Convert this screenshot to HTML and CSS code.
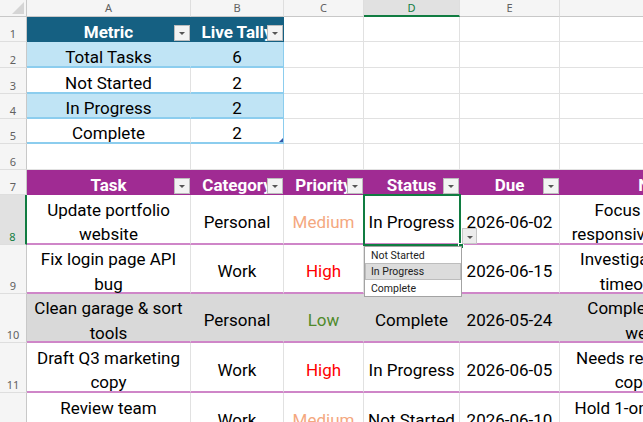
FILE: index.html
```html
<!DOCTYPE html>
<html lang="en">

<head>
    <meta charset="UTF-8">
    <title>Task Tracker</title>
    <link rel="stylesheet" href="styles.css">
</head>

<body>
    <div id="sheet">
        <div class="row r-head">
            <div class="corner"><span class="tri"></span></div>
            <div class="colhead">A</div>
            <div class="colhead">B</div>
            <div class="colhead">C</div>
            <div class="colhead selected">D</div>
            <div class="colhead">E</div>
            <div class="colhead">F</div>
        </div>

        <!-- tally table -->
        <div class="row h25">
            <div class="rowhead">1</div>
            <div class="cell th teal">Metric<span class="filter"></span></div>
            <div class="cell th teal">Live Tally<span class="filter"></span></div>
            <div class="cell"></div>
            <div class="cell"></div>
            <div class="cell"></div>
            <div class="cell"></div>
        </div>
        <div class="row h26">
            <div class="rowhead">2</div>
            <div class="cell tally band">Total Tasks</div>
            <div class="cell tally band last">6</div>
            <div class="cell"></div>
            <div class="cell"></div>
            <div class="cell"></div>
            <div class="cell"></div>
        </div>
        <div class="row h26">
            <div class="rowhead">3</div>
            <div class="cell tally">Not Started</div>
            <div class="cell tally last">2</div>
            <div class="cell"></div>
            <div class="cell"></div>
            <div class="cell"></div>
            <div class="cell"></div>
        </div>
        <div class="row h25">
            <div class="rowhead">4</div>
            <div class="cell tally band">In Progress</div>
            <div class="cell tally band last">2</div>
            <div class="cell"></div>
            <div class="cell"></div>
            <div class="cell"></div>
            <div class="cell"></div>
        </div>
        <div class="row h25">
            <div class="rowhead">5</div>
            <div class="cell tally">Complete</div>
            <div class="cell tally last">2<span class="resize"></span></div>
            <div class="cell"></div>
            <div class="cell"></div>
            <div class="cell"></div>
            <div class="cell"></div>
        </div>
        <div class="row h26">
            <div class="rowhead">6</div>
            <div class="cell"></div>
            <div class="cell"></div>
            <div class="cell"></div>
            <div class="cell"></div>
            <div class="cell"></div>
            <div class="cell"></div>
        </div>

        <!-- task table -->
        <div class="row h25">
            <div class="rowhead">7</div>
            <div class="cell th purple">Task<span class="filter"></span></div>
            <div class="cell th purple">Category<span class="filter"></span></div>
            <div class="cell th purple">Priority<span class="filter"></span></div>
            <div class="cell th purple">Status<span class="filter"></span></div>
            <div class="cell th purple">Due<span class="filter"></span></div>
            <div class="cell th purple">Notes<span class="filter"></span></div>
        </div>
        <div class="row h50">
            <div class="rowhead selected">8</div>
            <div class="cell task"><span>Update portfolio</span><span>website</span></div>
            <div class="cell task">Personal</div>
            <div class="cell task med">Medium</div>
            <div class="cell task">In Progress</div>
            <div class="cell task">2026-06-02</div>
            <div class="cell task"><span>Focus on the new</span><span>responsive grid and nav</span></div>
        </div>
        <div class="row h49">
            <div class="rowhead">9</div>
            <div class="cell task"><span>Fix login page API</span><span>bug</span></div>
            <div class="cell task">Work</div>
            <div class="cell task high">High</div>
            <div class="cell task">Not Started</div>
            <div class="cell task">2026-06-15</div>
            <div class="cell task"><span>Investigate the server</span><span>timeout on login</span></div>
        </div>
        <div class="row h49 done">
            <div class="rowhead">10</div>
            <div class="cell task"><span>Clean garage &amp; sort</span><span>tools</span></div>
            <div class="cell task">Personal</div>
            <div class="cell task low">Low</div>
            <div class="cell task">Complete</div>
            <div class="cell task">2026-05-24</div>
            <div class="cell task"><span>Completed over the</span><span>weekend.</span></div>
        </div>
        <div class="row h50">
            <div class="rowhead">11</div>
            <div class="cell task"><span>Draft Q3 marketing</span><span>copy</span></div>
            <div class="cell task">Work</div>
            <div class="cell task high">High</div>
            <div class="cell task">In Progress</div>
            <div class="cell task">2026-06-05</div>
            <div class="cell task"><span>Needs review from the</span><span>copy editors</span></div>
        </div>
        <div class="row h50">
            <div class="rowhead">12</div>
            <div class="cell task"><span>Review team</span><span>goals</span></div>
            <div class="cell task">Work</div>
            <div class="cell task med">Medium</div>
            <div class="cell task">Not Started</div>
            <div class="cell task">2026-06-10</div>
            <div class="cell task"><span>Hold 1-on-1s with each</span><span>direct report</span></div>
        </div>

        <!-- active cell D8 with its validation list open -->
        <div class="selection"><span class="handle"></span></div>
        <div class="dv-button"></div>
        <ul class="dv-list">
            <li>Not Started</li>
            <li class="hover">In Progress</li>
            <li>Complete</li>
        </ul>
    </div>
</body>

</html>
```

FILE: styles.css
```css
* {
    box-sizing: border-box;
}

body {
    margin: 0;
    overflow: hidden;
    background-color: #fff;
    font-family: Roboto, "Liberation Sans", sans-serif;
    color: #000;
}

#sheet {
    position: relative;
    width: 763px;
}

.row {
    display: grid;
    grid-template-columns: 27px 164px 93px 80px 96px 100px 203px;
    grid-template-rows: 100%;
}

.r-head {
    height: 17px;
}

.h25 {
    height: 25px;
}

.h26 {
    height: 26px;
}

.h49 {
    height: 49px;
}

.h50 {
    height: 50px;
}

/* headings */
.corner {
    position: relative;
    background-color: #f5f5f5;
    border-right: 1px solid #c8c8c8;
    border-bottom: 1px solid #c8c8c8;
}

.corner .tri {
    position: absolute;
    right: 2px;
    bottom: 2px;
    border-left: 12px solid transparent;
    border-bottom: 12px solid #d5d5d5;
}

.colhead {
    background-color: #f5f5f5;
    border-right: 1px solid #dedede;
    border-bottom: 1px solid #c8c8c8;
    font-family: "Noto Sans", sans-serif;
    font-size: 11px;
    line-height: 16px;
    color: #616161;
    text-align: center;
}

.colhead.selected {
    background-color: #e1e1e1;
    border-bottom: 2px solid #107c41;
    color: #107c41;
}

.rowhead {
    display: flex;
    align-items: flex-end;
    justify-content: center;
    background-color: #f5f5f5;
    border-right: 1px solid #c8c8c8;
    border-bottom: 1px solid #dedede;
    font-family: "Noto Sans", sans-serif;
    font-size: 11px;
    line-height: 14px;
    color: #616161;
}

.rowhead.selected {
    background-color: #e1e1e1;
    border-right: 2px solid #107c41;
    color: #107c41;
}

/* cells */
.cell {
    position: relative;
    display: flex;
    align-items: flex-end;
    justify-content: center;
    border-right: 1px solid #e1e1e1;
    border-bottom: 1px solid #e1e1e1;
    font-size: 17px;
    line-height: 18px;
    white-space: nowrap;
}

.th {
    font-weight: bold;
    color: #fff;
}

.teal {
    background-color: #156082;
    border-color: #156082;
}

.purple {
    background-color: #a02b93;
    border-color: #a02b93;
}

.filter {
    position: absolute;
    right: 0;
    bottom: 0;
    width: 16px;
    height: 16px;
    background-color: #f3f3f3;
    border: 1px solid #bcbcbc;
}

.filter::after {
    content: "";
    position: absolute;
    left: 4px;
    top: 6px;
    border-left: 3px solid transparent;
    border-right: 3px solid transparent;
    border-top: 3px solid #555;
}

.tally {
    border-bottom: 2px solid #8ccdee;
}

.band {
    background-color: #c0e4f5;
    border-right-color: #c0e4f5;
}

.tally.last {
    border-right: 1px solid #8ccdee;
}

.resize {
    position: absolute;
    right: 0;
    bottom: 0;
    border-left: 4px solid transparent;
    border-bottom: 4px solid #3559a8;
}

/* wrapped task rows: one span per line, each centred on its own */
.task {
    flex-direction: column;
    justify-content: center;
    align-items: center;
    padding-top: 6px;
    line-height: 24.5px;
    border-bottom: 2px solid #cf86c8;
}

.done .task {
    background-color: #d9d9d9;
    border-right-color: #d9d9d9;
}

.med {
    color: #f4a87f;
}

.high {
    color: #ff0000;
}

.low {
    color: #4f8a2b;
}

/* active cell and its list */
.selection {
    position: absolute;
    left: 363px;
    top: 194px;
    width: 98px;
    height: 52px;
    border: 2px solid #107c41;
}

.selection .handle {
    position: absolute;
    right: -5px;
    bottom: -5px;
    width: 6px;
    height: 6px;
    background-color: #107c41;
    border: 1px solid #fff;
}

.dv-button {
    position: absolute;
    left: 462px;
    top: 228px;
    width: 15px;
    height: 16px;
    background-color: #ececec;
    border: 1px solid #c6c6c6;
}

.dv-button::after {
    content: "";
    position: absolute;
    left: 4px;
    top: 7px;
    border-left: 3px solid transparent;
    border-right: 3px solid transparent;
    border-top: 3px solid #555;
}

.dv-list {
    position: absolute;
    left: 364px;
    top: 246px;
    width: 98px;
    height: 51px;
    margin: 0;
    padding: 0;
    list-style: none;
    background-color: #fff;
    border: 1px solid #a3a3a3;
    font-size: 10.5px;
    color: #222;
}

.dv-list li {
    height: 16.3px;
    line-height: 16px;
    padding-left: 5px;
    border: 1px solid transparent;
}

.dv-list li.hover {
    background-color: #dcdcdc;
    border-color: #bdbdbd;
}
```
